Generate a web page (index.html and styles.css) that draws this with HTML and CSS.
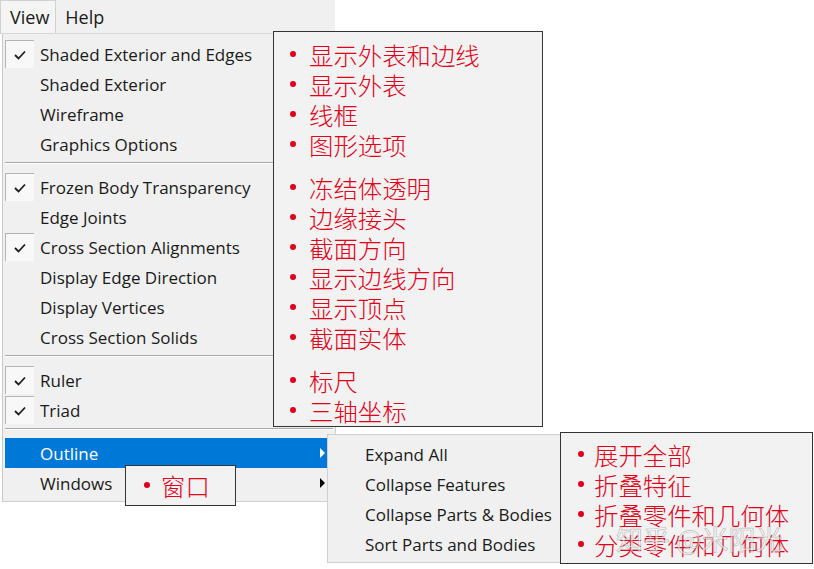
FILE: index.html
```html
<!DOCTYPE html>
<html lang="zh-CN">
<head>
  <meta charset="UTF-8">
  <meta name="viewport" content="width=device-width, initial-scale=1.0">
  <title>View menu</title>
  <link rel="stylesheet" href="styles.css">
</head>
<body>
  <div class="canvas">
    <div class="menu">
      <div class="menubar">
        <span class="mb-item active">View</span>
        <span class="mb-item">Help</span>
      </div>
      <div class="dropdown">
        <div class="group">
          <div class="item"><span class="check on"><svg width="12" height="10" viewBox="0 0 12 10"><path d="M1 5 L4.5 8.5 L11 1.5"/></svg></span><span class="label">Shaded Exterior and Edges</span></div>
          <div class="item"><span class="check"></span><span class="label">Shaded Exterior</span></div>
          <div class="item"><span class="check"></span><span class="label">Wireframe</span></div>
          <div class="item"><span class="check"></span><span class="label">Graphics Options</span></div>
        </div>
        <div class="sep"></div>
        <div class="group">
          <div class="item"><span class="check on"><svg width="12" height="10" viewBox="0 0 12 10"><path d="M1 5 L4.5 8.5 L11 1.5"/></svg></span><span class="label">Frozen Body Transparency</span></div>
          <div class="item"><span class="check"></span><span class="label">Edge Joints</span></div>
          <div class="item"><span class="check on"><svg width="12" height="10" viewBox="0 0 12 10"><path d="M1 5 L4.5 8.5 L11 1.5"/></svg></span><span class="label">Cross Section Alignments</span></div>
          <div class="item"><span class="check"></span><span class="label">Display Edge Direction</span></div>
          <div class="item"><span class="check"></span><span class="label">Display Vertices</span></div>
          <div class="item"><span class="check"></span><span class="label">Cross Section Solids</span></div>
        </div>
        <div class="sep"></div>
        <div class="group">
          <div class="item"><span class="check on"><svg width="12" height="10" viewBox="0 0 12 10"><path d="M1 5 L4.5 8.5 L11 1.5"/></svg></span><span class="label">Ruler</span></div>
          <div class="item"><span class="check on"><svg width="12" height="10" viewBox="0 0 12 10"><path d="M1 5 L4.5 8.5 L11 1.5"/></svg></span><span class="label">Triad</span></div>
        </div>
        <div class="sep"></div>
        <div class="group">
          <div class="item hover"><span class="check"></span><span class="label">Outline</span><span class="arrow"></span></div>
          <div class="item"><span class="check"></span><span class="label">Windows</span><span class="arrow"></span></div>
        </div>
      </div>
    </div>

    <!-- notes for the View menu -->
    <div class="note note-view">
      <div class="group">
        <div class="line">显示外表和边线</div>
        <div class="line">显示外表</div>
        <div class="line">线框</div>
        <div class="line">图形选项</div>
      </div>
      <div class="gap"></div>
      <div class="group">
        <div class="line">冻结体透明</div>
        <div class="line">边缘接头</div>
        <div class="line">截面方向</div>
        <div class="line">显示边线方向</div>
        <div class="line">显示顶点</div>
        <div class="line">截面实体</div>
      </div>
      <div class="gap"></div>
      <div class="group">
        <div class="line">标尺</div>
        <div class="line">三轴坐标</div>
      </div>
    </div>

    <div class="submenu">
      <div class="sub-item">Expand All</div>
      <div class="sub-item">Collapse Features</div>
      <div class="sub-item">Collapse Parts &amp; Bodies</div>
      <div class="sub-item">Sort Parts and Bodies</div>
    </div>

    <div class="note note-outline">
      <div class="line">展开全部</div>
      <div class="line">折叠特征</div>
      <div class="line">折叠零件和几何体</div>
      <div class="line">分类零件和几何体</div>
    </div>

    <div class="note note-windows">
      <div class="line">窗口</div>
    </div>

    <div class="watermark">知乎 @米阳光</div>
  </div>
</body>
</html>
```

FILE: styles.css
```css
body {
  margin: 0;
  background: #fff;
  font-family: "Open Sans", "Noto Sans", sans-serif;
  color: #1a1a1a;
}

.canvas {
  position: relative;
  width: 814px;
  height: 569px;
  overflow: hidden;
}

/* main menu */
.menu {
  width: 335px;
  font-size: 17px;
}

.menubar {
  display: flex;
  height: 33px;
  background: #f0f0f0;
  border-bottom: 1px solid #d6d6d6;
}

.mb-item {
  display: flex;
  align-items: center;
  padding: 0 9px;
  font-size: 18px;
}

.mb-item.active {
  padding: 0 6px 0 9px;
  background: #f5f5f5;
  border: 1px solid #d0d0d0;
  border-bottom: none;
}

.dropdown {
  margin-left: 2px;
  width: 326px;
  padding: 5px 4px 3px 2px;
  background: #f0f0f0;
  border-left: 1px solid #c9c9c9;
  border-right: 1px solid #cfcfcf;
  border-bottom: 1px solid #cfcfcf;
}

.item {
  display: flex;
  align-items: center;
  height: 30px;
}

.check {
  box-sizing: border-box;
  width: 29px;
  height: 28px;
  margin-right: 6px;
  display: flex;
  align-items: center;
  justify-content: center;
  flex: none;
}

.check.on {
  background: #f8f8f8;
  border-top: 1px solid #b4b4b4;
  border-left: 1px solid #b4b4b4;
}

.check svg path {
  fill: none;
  stroke: #1e1e1e;
  stroke-width: 1.8;
}

.label {
  white-space: nowrap;
}

.arrow {
  width: 0;
  height: 0;
  margin-left: auto;
  margin-right: 6px;
  border-top: 5px solid transparent;
  border-bottom: 5px solid transparent;
  border-left: 5px solid #000;
}

.item.hover {
  background: #0078d7;
  color: #fff;
}

.item.hover .arrow {
  border-left-color: #fff;
}

.sep {
  height: 13px;
  box-sizing: border-box;
  padding-top: 3px;
  margin-right: -2px;
}

.sep::before {
  content: "";
  display: block;
  height: 1px;
  background: #a8a8a8;
  border-bottom: 1px solid #fff;
}

/* callouts */
.note {
  position: absolute;
  box-sizing: border-box;
  background: #f2f2f2;
  border: 1px solid #333;
  color: #e0001a;
  font-family: "Noto Sans CJK SC", sans-serif;
  font-size: 24.4px;
  font-weight: 300;
}

.note .line {
  display: flex;
  align-items: center;
  height: 30px;
  white-space: nowrap;
}

.note .line::before {
  content: "";
  width: 6px;
  height: 6px;
  border-radius: 50%;
  background: #e0001a;
  margin-right: 13px;
  flex: none;
}

.note .gap {
  height: 13px;
}

.note-view {
  left: 273px;
  top: 31px;
  width: 270px;
  height: 396px;
  padding: 7px 0 0 16px;
}

.note-outline {
  left: 560px;
  top: 432px;
  width: 253px;
  height: 132px;
  padding: 6px 0 0 17px;
}

.note-outline .line::before {
  margin-right: 10px;
}

.note-windows {
  left: 125px;
  top: 465px;
  width: 111px;
  height: 41px;
  padding: 4px 0 0 18px;
}

.note-windows .line::before {
  margin-right: 11px;
}

.submenu {
  position: absolute;
  left: 327px;
  top: 434px;
  width: 250px;
  height: 129px;
  box-sizing: border-box;
  padding: 4px 0 0 37px;
  background: #f0f0f0;
  border: 1px solid #cfcfcf;
  font-size: 17px;
}

.sub-item {
  display: flex;
  align-items: center;
  height: 30px;
  white-space: nowrap;
}

.watermark {
  position: absolute;
  left: 616px;
  top: 519px;
  font-family: "Noto Sans CJK SC", sans-serif;
  font-size: 27px;
  color: rgba(255, 255, 255, 0.55);
  -webkit-text-stroke: 0.7px rgba(110, 110, 110, 0.45);
  white-space: nowrap;
}
```
